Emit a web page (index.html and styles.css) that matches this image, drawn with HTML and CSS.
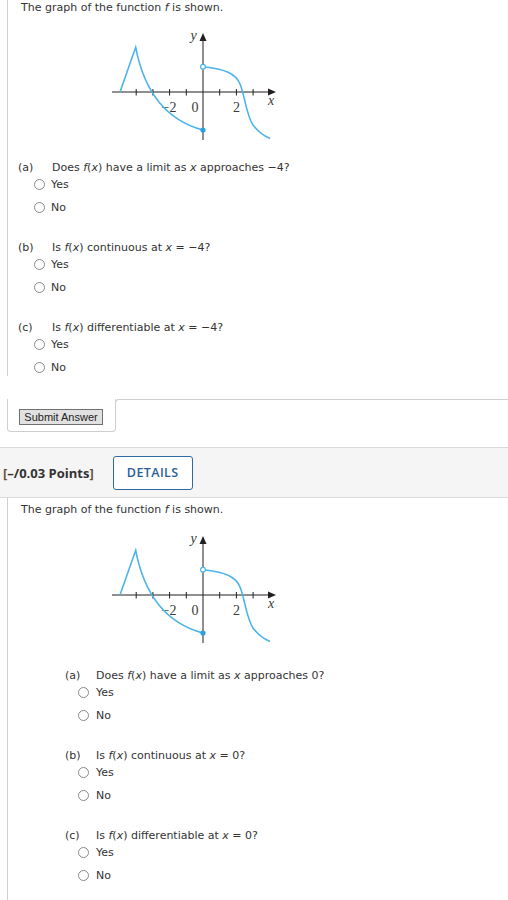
FILE: index.html
```html
<!DOCTYPE html>
<html>
<head>
<meta charset="utf-8">
<link rel="stylesheet" href="styles.css">
</head>
<body>
<div class="question">
  <div class="q-body">
    <p class="intro">The graph of the function <i>f</i> is shown.</p>
    <svg class="graph" width="172" height="116" viewBox="0 0 172 116">
      <line class="axis" x1="4" y1="64" x2="162" y2="64"/>
      <polygon class="arrow" points="168,64 160,60.5 160,67.5"/>
      <line class="axis" x1="95" y1="112" x2="95" y2="12"/>
      <polygon class="arrow" points="95,5 91.5,13 98.5,13"/>
      <g class="ticks">
        <line x1="28.2" y1="61" x2="28.2" y2="67.5"/>
        <line x1="44.9" y1="61" x2="44.9" y2="67.5"/>
        <line x1="61.6" y1="61" x2="61.6" y2="67.5"/>
        <line x1="78.3" y1="61" x2="78.3" y2="67.5"/>
        <line x1="111.7" y1="61" x2="111.7" y2="67.5"/>
        <line x1="128.4" y1="61" x2="128.4" y2="67.5"/>
        <line x1="145.1" y1="61" x2="145.1" y2="67.5"/>
      </g>
      <text class="lbl" x="61" y="83.5" text-anchor="middle">−2</text>
      <text class="lbl" x="90.5" y="83.5" text-anchor="end">0</text>
      <text class="lbl" x="128.5" y="83.5" text-anchor="middle">2</text>
      <text class="lbl it" x="160" y="77">x</text>
      <text class="lbl it" x="82.5" y="12">y</text>
      <path class="curve" d="M12,64 L27.7,19.3 C34,52 50,90 95,102"/>
      <path class="curve" d="M95,38.7 C118,41 128,46 132,56 C137,68 138,86 145,97 C151,105 156,108 162,110.5"/>
      <circle class="dot" cx="95" cy="102" r="2.6"/>
      <circle class="odot" cx="95" cy="38.7" r="2.4"/>
    </svg>
    <div class="parts">
      <div class="part">
        <div class="part-label"><span class="letter">(a)</span><span class="qtext">Does <i>f</i>(<i>x</i>) have a limit as <i>x</i> approaches −4?</span></div>
        <div class="opt"><span class="radio"></span><span>Yes</span></div>
        <div class="opt gap"><span class="radio"></span><span>No</span></div>
      </div>
      <div class="part">
        <div class="part-label"><span class="letter">(b)</span><span class="qtext">Is <i>f</i>(<i>x</i>) continuous at <i>x</i> = −4?</span></div>
        <div class="opt"><span class="radio"></span><span>Yes</span></div>
        <div class="opt gap"><span class="radio"></span><span>No</span></div>
      </div>
      <div class="part">
        <div class="part-label"><span class="letter">(c)</span><span class="qtext">Is <i>f</i>(<i>x</i>) differentiable at <i>x</i> = −4?</span></div>
        <div class="opt"><span class="radio"></span><span>Yes</span></div>
        <div class="opt gap"><span class="radio"></span><span>No</span></div>
      </div>
    </div>
  </div>
  <div class="submit-row">
    <div class="submit-box"><button class="submit" type="button">Submit Answer</button></div>
    <div class="submit-fill"></div>
  </div>
</div>

<div class="points-bar">
  <span class="points"><span class="br">[</span>–/0.03 Points<span class="br">]</span></span>
  <button class="details" type="button">DETAILS</button>
</div>

<div class="question second">
  <div class="q-body">
    <p class="intro">The graph of the function <i>f</i> is shown.</p>
    <svg class="graph" width="172" height="116" viewBox="0 0 172 116">
      <line class="axis" x1="4" y1="64" x2="162" y2="64"/>
      <polygon class="arrow" points="168,64 160,60.5 160,67.5"/>
      <line class="axis" x1="95" y1="112" x2="95" y2="12"/>
      <polygon class="arrow" points="95,5 91.5,13 98.5,13"/>
      <g class="ticks">
        <line x1="28.2" y1="61" x2="28.2" y2="67.5"/>
        <line x1="44.9" y1="61" x2="44.9" y2="67.5"/>
        <line x1="61.6" y1="61" x2="61.6" y2="67.5"/>
        <line x1="78.3" y1="61" x2="78.3" y2="67.5"/>
        <line x1="111.7" y1="61" x2="111.7" y2="67.5"/>
        <line x1="128.4" y1="61" x2="128.4" y2="67.5"/>
        <line x1="145.1" y1="61" x2="145.1" y2="67.5"/>
      </g>
      <text class="lbl" x="61" y="83.5" text-anchor="middle">−2</text>
      <text class="lbl" x="90.5" y="83.5" text-anchor="end">0</text>
      <text class="lbl" x="128.5" y="83.5" text-anchor="middle">2</text>
      <text class="lbl it" x="160" y="77">x</text>
      <text class="lbl it" x="82.5" y="12">y</text>
      <path class="curve" d="M12,64 L27.7,19.3 C34,52 50,90 95,102"/>
      <path class="curve" d="M95,38.7 C118,41 128,46 132,56 C137,68 138,86 145,97 C151,105 156,108 162,110.5"/>
      <circle class="dot" cx="95" cy="102" r="2.6"/>
      <circle class="odot" cx="95" cy="38.7" r="2.4"/>
    </svg>
    <div class="parts indented">
      <div class="part">
        <div class="part-label"><span class="letter">(a)</span><span class="qtext">Does <i>f</i>(<i>x</i>) have a limit as <i>x</i> approaches 0?</span></div>
        <div class="opt"><span class="radio"></span><span>Yes</span></div>
        <div class="opt gap"><span class="radio"></span><span>No</span></div>
      </div>
      <div class="part">
        <div class="part-label"><span class="letter">(b)</span><span class="qtext">Is <i>f</i>(<i>x</i>) continuous at <i>x</i> = 0?</span></div>
        <div class="opt"><span class="radio"></span><span>Yes</span></div>
        <div class="opt gap"><span class="radio"></span><span>No</span></div>
      </div>
      <div class="part">
        <div class="part-label"><span class="letter">(c)</span><span class="qtext">Is <i>f</i>(<i>x</i>) differentiable at <i>x</i> = 0?</span></div>
        <div class="opt"><span class="radio"></span><span>Yes</span></div>
        <div class="opt gap"><span class="radio"></span><span>No</span></div>
      </div>
    </div>
  </div>
</div>
</body>
</html>
```
FILE: styles.css
```css
html, body {
  margin: 0;
  padding: 0;
  background: #fff;
}
body {
  font-family: "DejaVu Sans", Verdana, sans-serif;
  font-size: 11px;
  color: #333;
}
.question {
  margin-left: 7px;
}
.q-body {
  border-left: 1px solid #cfcfcf;
  padding-left: 10px;
  padding-bottom: 0;
}
.intro {
  margin: 0;
  padding-top: 1px;
  padding-left: 3px;
  line-height: 14px;
}
.graph {
  display: block;
  margin-top: 13px;
  margin-left: 90px;
}
.axis {
  stroke: #231f20;
  stroke-width: 1;
}
.arrow {
  fill: #231f20;
}
.ticks line {
  stroke: #231f20;
  stroke-width: 1;
}
.lbl {
  font-family: "Liberation Serif", "DejaVu Serif", serif;
  font-size: 14px;
  fill: #3a3a3a;
}
.lbl.it {
  font-style: italic;
}
.curve {
  fill: none;
  stroke: #4cb4ea;
  stroke-width: 1.6;
  stroke-linejoin: miter;
}
.dot {
  fill: #2d9fe0;
}
.odot {
  fill: #fff;
  stroke: #4cb4ea;
  stroke-width: 1.2;
}
.parts {
  margin-top: 15px;
}
.part {
  margin-bottom: 23px;
}
.part-label {
  display: flex;
  height: 16px;
  align-items: center;
}
.letter {
  width: 34px;
  flex: none;
}
.opt {
  display: flex;
  align-items: center;
  height: 18px;
  padding-left: 16px;
  color: #333;
}
.opt.gap {
  margin-top: 5px;
}
.radio {
  width: 9px;
  height: 9px;
  border: 1px solid #8a8a8a;
  border-radius: 50%;
  margin-right: 6px;
  flex: none;
  background: #fff;
}
.parts.indented {
  margin-top: 20px;
  padding-left: 47px;
}
.parts.indented .letter {
  width: 31px;
}
.parts.indented .opt {
  padding-left: 13px;
}
.parts.indented .radio {
  margin-right: 7px;
}
.submit-row {
  display: flex;
  align-items: flex-start;
}
.submit-box {
  width: 96px;
  padding: 10px 0 6px 11px;
  border-left: 1px solid #cfcfcf;
  border-right: 1px solid #cfcfcf;
  border-bottom: 1px solid #cfcfcf;
  border-bottom-left-radius: 4px;
  border-bottom-right-radius: 4px;
  flex: none;
}
.submit {
  display: block;
  height: 16px;
  width: 84px;
  padding: 0;
  margin: 0;
  font-family: "Liberation Sans", Arial, sans-serif;
  font-size: 11px;
  line-height: 14px;
  color: #222;
  background: #e1e1e1;
  border: 1px solid #707070;
  border-radius: 0;
}
.submit-fill {
  flex: 1;
  height: 10px;
  margin-left: -1px;
  border-top: 1px solid #cfcfcf;
  border-left: 1px solid #cfcfcf;
  border-top-left-radius: 4px;
}
.points-bar {
  margin-top: 15px;
  height: 49px;
  background: #f5f5f5;
  border-top: 1px solid #dadada;
  border-bottom: 1px solid #dadada;
  display: flex;
  align-items: center;
  padding-left: 3px;
  font-family: "Open Sans", sans-serif;
}
.points {
  font-weight: bold;
  font-size: 13px;
  color: #333;
}
.points .br {
  color: #6e5233;
}
.details {
  margin-left: 19px;
  width: 80px;
  height: 34px;
  padding: 0;
  font-family: "Open Sans", sans-serif;
  font-size: 12.5px;
  font-weight: 600;
  letter-spacing: 0.4px;
  color: #2b5f94;
  background: #fff;
  border: 1px solid #2f6aa3;
  border-radius: 3px;
}
.second .q-body {
  padding-top: 4px;
  padding-bottom: 30px;
}
.second .graph {
  margin-top: 14px;
}
```
